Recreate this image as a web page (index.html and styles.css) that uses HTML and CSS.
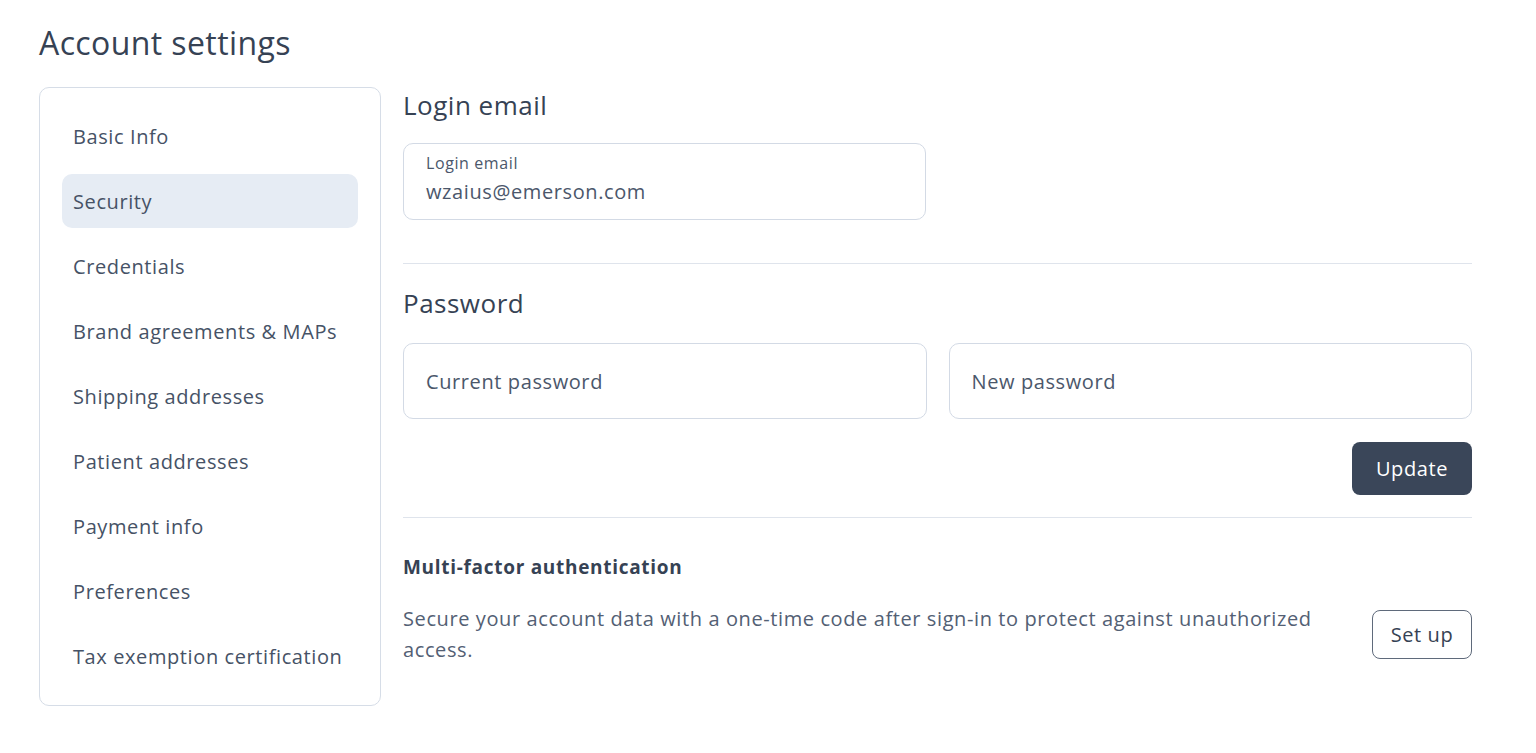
FILE: index.html
```html
<!DOCTYPE html>
<html lang="en">
<head>
  <meta charset="UTF-8">
  <meta name="viewport" content="width=device-width, initial-scale=1.0">
  <title>Account settings</title>
  <link rel="stylesheet" href="styles.css">
</head>
<body>

  <h1 class="page-title">Account settings</h1>

  <div class="layout">
    <nav class="side-nav">
      <a class="nav-item">Basic Info</a>
      <a class="nav-item active">Security</a>
      <a class="nav-item">Credentials</a>
      <a class="nav-item">Brand agreements &amp; MAPs</a>
      <a class="nav-item">Shipping addresses</a>
      <a class="nav-item">Patient addresses</a>
      <a class="nav-item">Payment info</a>
      <a class="nav-item">Preferences</a>
      <a class="nav-item">Tax exemption certification</a>
    </nav>

    <main class="content">
      <section class="block">
        <h2 class="block-title">Login email</h2>
        <div class="field-row">
          <div class="field">
            <span class="field-label">Login email</span>
            <span class="field-value">wzaius@emerson.com</span>
          </div>
        </div>
      </section>

      <hr class="divider">

      <section class="block">
        <h2 class="block-title">Password</h2>
        <div class="field-row">
          <div class="field placeholder">Current password</div>
          <div class="field placeholder">New password</div>
        </div>
        <div class="actions">
          <button class="btn-primary">Update</button>
        </div>
      </section>

      <hr class="divider">

      <section class="mfa">
        <h3 class="mfa-title">Multi-factor authentication</h3>
        <div class="mfa-row">
          <p class="mfa-text">Secure your account data with a one-time code after sign-in to protect against unauthorized access.</p>
          <button class="btn-outline">Set up</button>
        </div>
      </section>
    </main>
  </div>

</body>
</html>
```

FILE: styles.css
```css
body {
  margin: 0;
  padding: 0 64px 0 39px;
  font-family: "Open Sans", "Noto Sans", sans-serif;
  letter-spacing: 0.6px;
  color: #465266;
  background-color: #fff;
}
.page-title {
  margin: 0;
  padding-top: 23px;
  height: 87px;
  box-sizing: border-box;
  font-size: 32px;
  font-weight: 500;
  letter-spacing: 0.4px;
  color: #364254;
  line-height: 40px;
}
.layout {
  display: flex;
  gap: 22px;
  align-items: flex-start;
}
.side-nav {
  width: 342px;
  box-sizing: border-box;
  border: 1px solid #d6dde7;
  border-radius: 10px;
  padding: 21px 22px 22px;
  display: flex;
  flex-direction: column;
  gap: 11px;
}
.nav-item {
  display: flex;
  align-items: center;
  height: 54px;
  padding-left: 11px;
  border-radius: 10px;
  font-size: 20px;
  color: #465266;
}
.nav-item.active {
  background-color: #e6ecf4;
}
.content {
  flex: 1;
}
.block-title {
  margin: 0;
  height: 56px;
  font-size: 26px;
  font-weight: 500;
  letter-spacing: 0.5px;
  line-height: 36px;
  color: #364254;
}
.field-row {
  display: flex;
  gap: 22px;
}
.field {
  flex: 1;
  height: 77px;
  box-sizing: border-box;
  border: 1px solid #d3dae5;
  border-radius: 10px;
  padding: 0 22px;
  display: flex;
  flex-direction: column;
  justify-content: center;
}
.field-row .field:only-child {
  flex: 0 0 523px;
  justify-content: flex-start;
  padding-top: 8px;
}
.field-label {
  font-size: 16px;
  color: #4b576b;
  line-height: 22px;
}
.field-value {
  margin-top: 2px;
  font-size: 20px;
  color: #4b576b;
  line-height: 32px;
}
.field.placeholder {
  height: 76px;
  font-size: 20px;
  color: #4b576b;
}
.divider {
  border: none;
  border-top: 1px solid #dfe4ec;
  margin: 43px 0 21px;
}
.block + .divider + .block .block-title {
  height: 58px;
}
.actions {
  display: flex;
  justify-content: flex-end;
  margin-top: 23px;
}
.btn-primary {
  width: 120px;
  height: 53px;
  border: none;
  border-radius: 8px;
  background-color: #3a4659;
  color: #fff;
  font-family: inherit;
  font-size: 20px;
  letter-spacing: 0.6px;
  cursor: pointer;
}
.block:has(.actions) + .divider {
  margin-top: 22px;
  margin-bottom: 37px;
}
.mfa-title {
  margin: 0;
  font-size: 19px;
  font-weight: 700;
  letter-spacing: 0.7px;
  line-height: 24px;
  color: #364254;
}
.mfa-row {
  display: flex;
  align-items: center;
  gap: 40px;
  margin-top: 24px;
}
.mfa-text {
  margin: 0;
  flex: 1;
  font-size: 20px;
  line-height: 31px;
  color: #536074;
}
.btn-outline {
  flex: 0 0 100px;
  height: 49px;
  border: 1px solid #5f6a7b;
  border-radius: 8px;
  background: #fff;
  color: #364254;
  font-family: inherit;
  font-size: 20px;
  letter-spacing: 0.6px;
  cursor: pointer;
}
```
